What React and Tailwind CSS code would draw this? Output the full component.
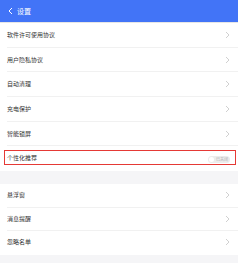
import React from "react";

function Chevron() {
  return (
    <svg width="5" height="8" viewBox="0 0 5 8" className="shrink-0">
      <path d="M1 1 L4 4 L1 7" fill="none" stroke="#c4c4c4" strokeWidth="0.8" />
    </svg>
  );
}

function Row({ label, last, tall, children }) {
  return (
    <div className="relative flex flex-col">
      <div
        className={
          (tall ? "h-[23.7px]" : "h-[22.5px]") +
          " flex items-center justify-between pl-[7px] pr-[8px]"
        }
      >
        <span className="text-[6px] leading-none text-[#333333]">{label}</span>
        {children || <Chevron />}
      </div>
      <div className={last ? "h-px" : "ml-[7px] h-px bg-[#f1f1f1]"} />
    </div>
  );
}

export default function App() {
  return (
    <div
      className="flex h-[263px] w-[238px] flex-col overflow-hidden bg-[#f5f5f7]"
      style={{ fontFamily: '"Noto Sans CJK SC", "Noto Sans", sans-serif' }}
    >
      <div className="flex h-[22px] items-center gap-[4px] bg-[#4274f7] pl-[8px]">
        <svg width="5" height="8" viewBox="0 0 5 8">
          <path d="M4 1 L1 4 L4 7" fill="none" stroke="#ffffff" strokeWidth="1" />
        </svg>
        <span className="text-[7px] leading-none text-white">设置</span>
      </div>
      <div className="h-px bg-[#e6e6e6]" />
      <div className="flex flex-col bg-white">
        <Row label="软件许可使用协议" tall />
        <Row label="用户隐私协议" tall />
        <Row label="自动清理" tall />
        <Row label="充电保护" tall />
        <Row label="智能锁屏" tall />
        <div className="relative">
          <Row label="个性化推荐" last tall>
            <div className="mt-[2px] flex h-[7px] w-[22px] items-center rounded-full bg-[#ececec] px-[1px]">
              <div className="h-[5px] w-[5px] rounded-full bg-white" />
              <span className="ml-[2px] text-[4px] leading-none text-[#b0b0b0]">已关闭</span>
            </div>
          </Row>
          <div className="pointer-events-none absolute left-[4px] right-[2px] top-[3.5px] bottom-[6px] border-[1.5px] border-[#e53935]" />
        </div>
      </div>
      <div className="h-[13px]" />
      <div className="flex flex-col bg-white">
        <Row label="悬浮窗" />
        <Row label="消息提醒" />
        <Row label="忽略名单" last />
      </div>
    </div>
  );
}
